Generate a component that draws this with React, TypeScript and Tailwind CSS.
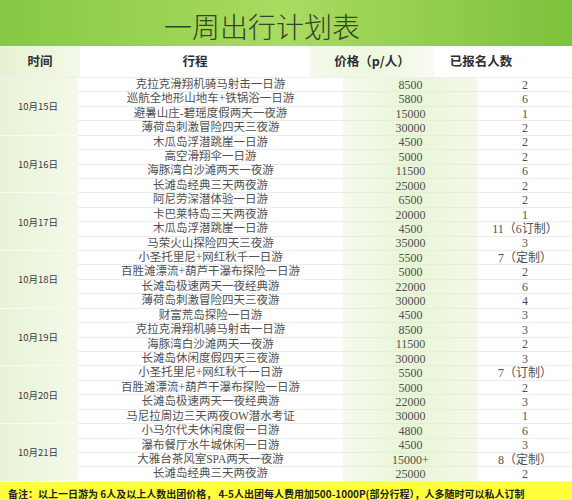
import React from 'react';

interface Trip {
  name: string;
  price: string;
  count: string;
}

interface DayPlan {
  date: string;
  trips: Trip[];
}

const plans: DayPlan[] = [
  {
    date: '10月15日',
    trips: [
      { name: '克拉克滑翔机骑马射击一日游', price: '8500', count: '2' },
      { name: '巡航全地形山地车+铁锅浴一日游', price: '5800', count: '6' },
      { name: '避暑山庄-碧瑶度假两天一夜游', price: '15000', count: '1' },
      { name: '薄荷岛刺激冒险四天三夜游', price: '30000', count: '2' },
    ],
  },
  {
    date: '10月16日',
    trips: [
      { name: '木瓜岛浮潜跳崖一日游', price: '4500', count: '2' },
      { name: '高空滑翔伞一日游', price: '5000', count: '2' },
      { name: '海豚湾白沙滩两天一夜游', price: '11500', count: '6' },
      { name: '长滩岛经典三天两夜游', price: '25000', count: '2' },
    ],
  },
  {
    date: '10月17日',
    trips: [
      { name: '阿尼劳深潜体验一日游', price: '6500', count: '2' },
      { name: '卡巴莱特岛三天两夜游', price: '20000', count: '1' },
      { name: '木瓜岛浮潜跳崖一日游', price: '4500', count: '11（6订制）' },
      { name: '马荣火山探险四天三夜游', price: '35000', count: '3' },
    ],
  },
  {
    date: '10月18日',
    trips: [
      { name: '小圣托里尼+网红秋千一日游', price: '5500', count: '7（定制）' },
      { name: '百胜滩漂流+葫芦干瀑布探险一日游', price: '5000', count: '2' },
      { name: '长滩岛极速两天一夜经典游', price: '22000', count: '6' },
      { name: '薄荷岛刺激冒险四天三夜游', price: '30000', count: '4' },
    ],
  },
  {
    date: '10月19日',
    trips: [
      { name: '财富荒岛探险一日游', price: '4500', count: '3' },
      { name: '克拉克滑翔机骑马射击一日游', price: '8500', count: '3' },
      { name: '海豚湾白沙滩两天一夜游', price: '11500', count: '2' },
      { name: '长滩岛休闲度假四天三夜游', price: '30000', count: '3' },
    ],
  },
  {
    date: '10月20日',
    trips: [
      { name: '小圣托里尼+网红秋千一日游', price: '5500', count: '7（订制）' },
      { name: '百胜滩漂流+葫芦干瀑布探险一日游', price: '5000', count: '2' },
      { name: '长滩岛极速两天一夜经典游', price: '22000', count: '3' },
      { name: '马尼拉周边三天两夜OW潜水考证', price: '30000', count: '1' },
    ],
  },
  {
    date: '10月21日',
    trips: [
      { name: '小马尔代夫休闲度假一日游', price: '4800', count: '6' },
      { name: '瀑布餐厅水牛城休闲一日游', price: '4500', count: '3' },
      { name: '大雅台茶风室SPA两天一夜游', price: '15000+', count: '8（定制）' },
      { name: '长滩岛经典三天两夜游', price: '25000', count: '2' },
    ],
  },
];

const serif = "font-['Liberation_Serif','Noto_Sans_CJK_SC',serif]";

const TripRow: React.FC<Trip> = ({ name, price, count }) => (
  <div className="flex h-[14.43px] text-[11.5px] leading-none text-[#505050]">
    <div className="flex w-[265px] items-center justify-center border-b border-[#ececec] whitespace-nowrap">{name}</div>
    <div className="flex w-[135px] items-center justify-center border-b border-[#e4eedb] bg-linear-to-r from-[#f5faec] via-[#e9f5d6] to-[#f2f9e6] text-[12px]">
      {price}
    </div>
    <div className="flex flex-1 items-center justify-center border-b border-[#ececec] text-[12px] whitespace-nowrap">{count}</div>
  </div>
);

const DayGroup: React.FC<DayPlan> = ({ date, trips }) => (
  <div className="flex">
    <div className="flex w-[78px] items-center justify-center border-b border-[#f7fbf0] bg-linear-to-r from-[#e8f3d6] to-[#f3f9ea] pr-[2px] font-['Noto_Sans_CJK_SC',sans-serif] text-[9.5px] text-[#3a3a3a]">
      {date}
    </div>
    <div className="flex-1">
      {trips.map((trip, index) => (
        <TripRow key={index} {...trip} />
      ))}
    </div>
  </div>
);

export default function App() {
  return (
    <div className={`h-[500px] w-[572px] overflow-hidden bg-white ${serif}`}>
      <div className="flex h-[46px] items-center justify-center bg-linear-to-r from-[#86c943] via-[#a9db60] to-[#7cc23a] pt-[6px] pr-[48px]">
        <span className="font-['Noto_Sans_CJK_SC',sans-serif] text-[28px] font-light leading-none text-[#34452a]">
          一周出行计划表
        </span>
      </div>

      <div className="flex h-[32px] items-center border-b border-[#eeeeee] font-['Noto_Sans_CJK_SC',sans-serif] text-[12.5px] font-bold text-[#2e2e2e]">
        <div className="flex h-full w-[80px] items-center justify-center bg-linear-to-r from-[#e6f2d2] to-[#f2f8e8]">时间</div>
        <div className="flex h-full w-[230px] items-center justify-center bg-white">行程</div>
        <div className="flex h-full w-[124px] items-center justify-center bg-linear-to-r from-[#f4f9ec] via-[#eef7e0] to-[#f8fbf2]">
          价格（p/人）
        </div>
        <div className="flex h-full w-[94px] items-center justify-center bg-white">已报名人数</div>
        <div className="h-full flex-1 bg-white" />
      </div>

      <div>
        {plans.map((plan) => (
          <DayGroup key={plan.date} {...plan} />
        ))}
      </div>

      <div className="h-[40px] bg-[#ffff3c] pl-[8px] pt-[5px] font-['Noto_Sans_CJK_SC',sans-serif] text-[10px] font-bold leading-[13px] whitespace-nowrap text-[#222]">
        备注：以上一日游为 6人及以上人数出团价格， 4-5人出团每人费用加500-1000P(部分行程），人多随时可以私人订制
      </div>
    </div>
  );
}
